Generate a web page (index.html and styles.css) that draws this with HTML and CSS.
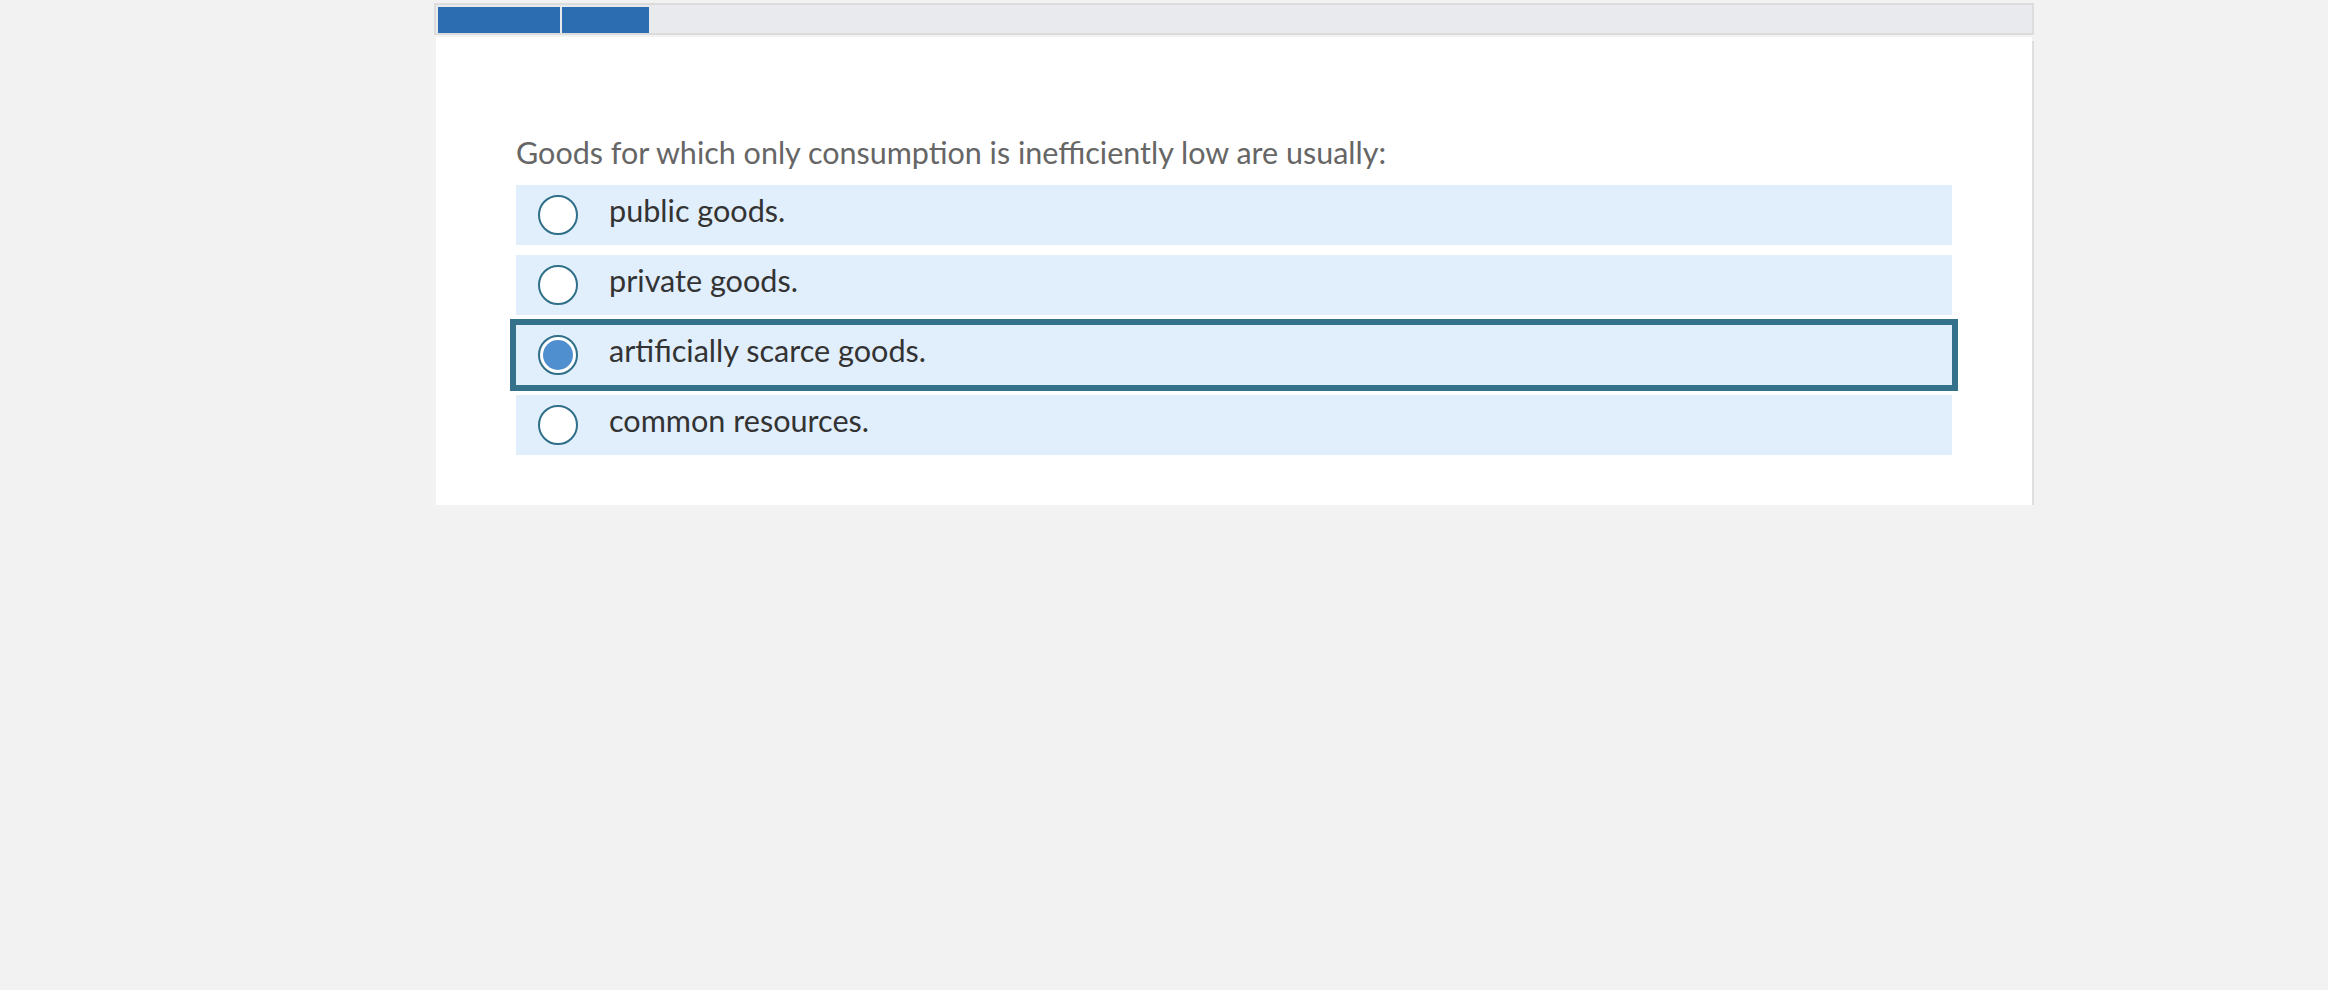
FILE: index.html
```html
<!DOCTYPE html>
<html lang="en">
<head>
<meta charset="utf-8">
<title>Question</title>
<link rel="stylesheet" href="styles.css">
</head>
<body>
<div class="page">
  <div class="progress">
    <div class="seg seg-1"></div>
    <div class="seg seg-2"></div>
  </div>
  <div class="card">
    <p class="question">Goods for which only consumption is inefficiently low are usually:</p>
    <ul class="options">
      <li class="option"><span class="radio"></span><span class="label">public goods.</span></li>
      <li class="option"><span class="radio"></span><span class="label">private goods.</span></li>
      <li class="option selected"><span class="radio checked"></span><span class="label">artificially scarce goods.</span></li>
      <li class="option"><span class="radio"></span><span class="label">common resources.</span></li>
    </ul>
  </div>
</div>
</body>
</html>
```
FILE: styles.css
```css
html, body {
  margin: 0;
  padding: 0;
  background: #f2f2f2;
}
body {
  font-family: Lato, "Open Sans", sans-serif;
}
.page {
  width: 1600px;
  margin-left: 434px;
  padding-top: 3px;
}
.progress {
  box-sizing: border-box;
  height: 32px;
  border: 2px solid #dcdcdc;
  background: #e9eaee;
  padding: 2px 0 0 2px;
  display: flex;
  gap: 2px;
}
.seg {
  height: 26px;
  background: #2c6cb0;
}
.seg-1 { width: 122px; }
.seg-2 { width: 87px; }
.card {
  margin: 2px 2px 0;
  background: #fff;
  padding: 97px 80px 50px;
  box-shadow: 0 2px 0 #ebebeb, 2px 4px 0 #dedede;
}
.question {
  margin: 0 0 15px;
  font-size: 30.5px;
  line-height: 36px;
  color: #666;
}
.options {
  list-style: none;
  margin: 0;
  padding: 0;
  display: flex;
  flex-direction: column;
  gap: 10px;
}
.option {
  height: 60px;
  background: #e1eefc;
  display: flex;
  align-items: center;
  padding-left: 22px;
}
.option.selected {
  outline: 6px solid #33728a;
}
.radio {
  box-sizing: border-box;
  width: 40px;
  height: 40px;
  border-radius: 50%;
  border: 2px solid #2f6f88;
  background: #fff;
  flex: none;
  position: relative;
}
.radio.checked::after {
  content: "";
  position: absolute;
  left: 3px;
  top: 3px;
  width: 30px;
  height: 30px;
  border-radius: 50%;
  background: #4f8fd0;
}
.label {
  margin-left: 31px;
  padding-bottom: 8px;
  font-size: 30.6px;
  line-height: 36px;
  color: #333;
}
```
